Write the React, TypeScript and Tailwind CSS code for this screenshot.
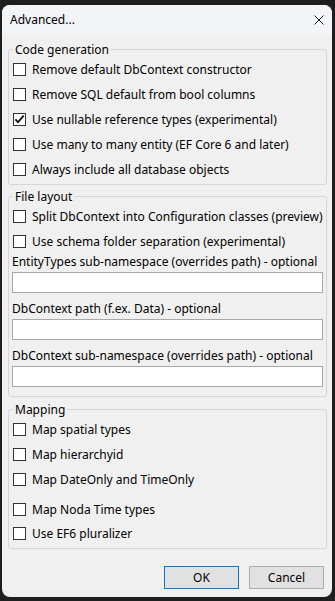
import { ReactNode } from 'react'

const font = { fontFamily: '"Noto Sans", "Open Sans", sans-serif' }

function Check({ label, checked = false, className = '' }: { label: string; checked?: boolean; className?: string }) {
  return (
    <div className={`flex h-[25px] items-center gap-[6px] pl-[1px] ${className}`}>
      <span className="flex h-[13px] w-[13px] shrink-0 items-center justify-center border border-[#333333] bg-white">
        {checked && (
          <svg width="11" height="11" viewBox="0 0 11 11">
            <path d="M1.4 5.4 L4 8.2 L9.6 1.6" fill="none" stroke="#000" strokeWidth="1.7" />
          </svg>
        )}
      </span>
      <span className="whitespace-nowrap leading-[16px]">{label}</span>
    </div>
  )
}

function Group({ title, children, className = '' }: { title: string; children: ReactNode; className?: string }) {
  return (
    <fieldset className={`rounded-[3px] border border-[#d6d6d6] px-[3px] ${className}`}>
      <legend className="ml-[1px] px-[2px] leading-[15px]">{title}</legend>
      {children}
    </fieldset>
  )
}

function Field({ label, className = '' }: { label: string; className?: string }) {
  return (
    <div className={className}>
      <div className="whitespace-nowrap leading-[16px]">{label}</div>
      <div className="mt-[2px] h-[21px] border border-[#a8a8a8] bg-white" />
    </div>
  )
}

export default function App() {
  return (
    <div className="h-[601px] w-[335px] bg-[#1e1e1e] pb-[4px] pl-[2px] pr-[3px] pt-[5px] text-[12px] text-black" style={font}>
      <div className="flex h-full flex-col overflow-hidden rounded-[8px] bg-[#f0f0f0]">
        <div className="flex h-[30px] shrink-0 items-center justify-between bg-[#f2f4f7] pl-[8px] pr-[8px]">
          <span className="leading-[16px]">Advanced...</span>
          <svg width="10" height="10" viewBox="0 0 10 10">
            <path d="M0.5 0.5 L9.5 9.5 M9.5 0.5 L0.5 9.5" stroke="#1a1a1a" strokeWidth="1" />
          </svg>
        </div>

        <div className="flex flex-1 flex-col pl-[6px] pr-[5px] pt-[7px]">
          <Group title="Code generation" className="pb-[2px]">
            <Check label="Remove default DbContext constructor" />
            <Check label="Remove SQL default from bool columns" />
            <Check label="Use nullable reference types (experimental)" checked />
            <Check label="Use many to many entity (EF Core 6 and later)" />
            <Check label="Always include all database objects" />
          </Group>

          <Group title="File layout" className="mt-[4px] pb-[9px]">
            <Check label="Split DbContext into Configuration classes (preview)" />
            <Check label="Use schema folder separation (experimental)" />
            <Field label="EntityTypes sub-namespace (overrides path) - optional" />
            <Field label="DbContext path (f.ex. Data) - optional" className="mt-[8px]" />
            <Field label="DbContext sub-namespace (overrides path) - optional" className="mt-[8px]" />
          </Group>

          <Group title="Mapping" className="mt-[5px] pb-[2px]">
            <Check label="Map spatial types" />
            <Check label="Map hierarchyid" />
            <Check label="Map DateOnly and TimeOnly" />
            <Check label="Map Noda Time types" className="mt-[5px]" />
            <Check label="Use EF6 pluralizer" className="-mt-px" />
          </Group>

          <div className="mt-[17px] flex justify-end gap-[10px] pr-[3px]">
            <button className="h-[23px] w-[75px] border border-[#0078d4] bg-[#e1e1e1] leading-[16px]">OK</button>
            <button className="h-[23px] w-[75px] border border-[#adadad] bg-[#e1e1e1] leading-[16px]">Cancel</button>
          </div>
        </div>
      </div>
    </div>
  )
}
